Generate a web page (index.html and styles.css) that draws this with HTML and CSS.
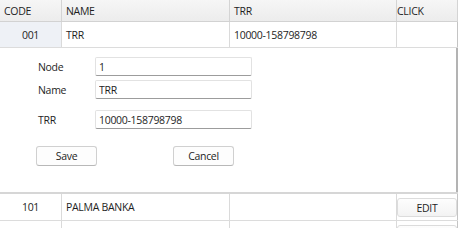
FILE: index.html
```html
<!DOCTYPE html>
<html lang="en">
<head>
  <meta charset="UTF-8">
  <title>Nodes</title>
  <link rel="stylesheet" href="styles.css">
</head>
<body>
  <div id="grid">
    <div class="row head">
      <div class="cell c-code">CODE</div>
      <div class="cell c-name">NAME</div>
      <div class="cell c-trr">TRR</div>
      <div class="cell c-click">CLICK</div>
    </div>
    <div class="row">
      <div class="cell c-code num sel">001</div>
      <div class="cell c-name">TRR</div>
      <div class="cell c-trr">10000-158798798</div>
      <div class="cell c-click"></div>
    </div>

    <div id="edit-panel">
      <div class="field">
        <label>Node</label>
        <input type="text" value="1">
      </div>
      <div class="field">
        <label>Name</label>
        <input type="text" value="TRR">
      </div>
      <div class="field gap">
        <label>TRR</label>
        <input type="text" value="10000-158798798">
      </div>
      <div class="panel-buttons">
        <button class="btn">Save</button>
        <button class="btn">Cancel</button>
      </div>
    </div>

    <div class="row top">
      <div class="cell c-code num">101</div>
      <div class="cell c-name">PALMA BANKA</div>
      <div class="cell c-trr"></div>
      <div class="cell c-click"><button class="edit-btn">EDIT</button></div>
    </div>
    <div class="row">
      <div class="cell c-code num"></div>
      <div class="cell c-name"></div>
      <div class="cell c-trr"></div>
      <div class="cell c-click"><button class="edit-btn"></button></div>
    </div>
  </div>
</body>
</html>
```

FILE: styles.css
```css
body {
  margin: 0;
  font-family: 'Open Sans', 'Noto Sans', sans-serif;
  font-size: 10.5px;
  letter-spacing: -0.3px;
  color: #1e1e1e;
  background-color: #fff;
}

#grid {
  width: 458px;
}

.row {
  display: grid;
  grid-template-columns: 62px 168px 167px 61px;
  height: 25px;
  border-bottom: 1px solid #dcdcdc;
}

.row.head {
  height: 21px;
  background: linear-gradient(#f6f6f6, #ececec);
  border-bottom: 1px solid #d2d2d2;
}

.row.top {
  border-top: 2px solid #d6d6d6;
  height: 26px;
}

.cell {
  display: flex;
  align-items: center;
  padding-left: 4px;
  border-right: 1px solid #dadada;
  overflow: hidden;
  white-space: nowrap;
}

.head .cell {
  border-right-color: #d4d4d4;
}

.cell.num {
  justify-content: center;
  padding-left: 0;
}

.cell.sel {
  background-color: #eef1f6;
}

.c-click {
  padding-left: 0;
  border-right-color: #c4c4c4;
}

.edit-btn {
  width: 61px;
  height: 19px;
  margin-top: 1px;
  padding: 0;
  font-family: inherit;
  font-size: inherit;
  letter-spacing: inherit;
  color: #1e1e1e;
  background: linear-gradient(#fdfdfd, #f3f3f3);
  border: 1px solid #dcdcdc;
  border-radius: 3px;
}

#edit-panel {
  height: 144px;
  border-right: 2px solid #b3b3b3;
  box-sizing: border-box;
  padding: 9px 0 0 38px;
}

.field {
  display: flex;
  align-items: center;
  height: 19px;
  margin-bottom: 4px;
}

.field.gap {
  margin-top: 11px;
}

.field label {
  width: 57px;
}

.field input {
  width: 157px;
  height: 19px;
  box-sizing: border-box;
  padding: 0 3px;
  font-family: inherit;
  font-size: inherit;
  letter-spacing: inherit;
  color: #1e1e1e;
  border: 1px solid #e2e2e2;
  border-bottom-color: #9c9c9c;
  border-radius: 2px;
}

.panel-buttons {
  display: flex;
  gap: 76px;
  margin-top: 17px;
  margin-left: -2px;
}

.btn {
  width: 61px;
  height: 20px;
  padding: 0;
  font-family: inherit;
  font-size: inherit;
  letter-spacing: inherit;
  color: #1e1e1e;
  background-color: #fdfdfd;
  border: 1px solid #d0d0d0;
  border-bottom-color: #b8b8b8;
  border-radius: 3px;
}
```
